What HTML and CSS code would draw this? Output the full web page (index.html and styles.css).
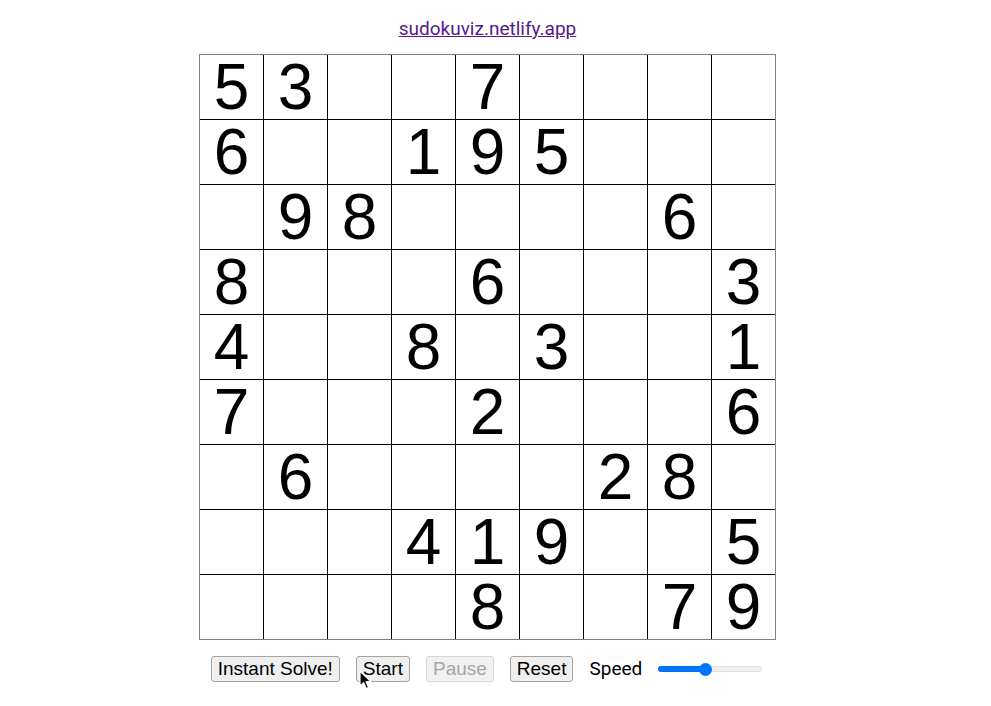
FILE: index.html
```html
<!DOCTYPE html>
<html>
<head>
<meta charset="utf-8">
<link rel="stylesheet" href="styles.css">
</head>
<body>
<div class="page">
  <div class="top"><a class="link" href="#">sudokuviz.netlify.app</a></div>
  <table class="board">
    <tr><td>5</td><td>3</td><td></td><td></td><td>7</td><td></td><td></td><td></td><td></td></tr>
    <tr><td>6</td><td></td><td></td><td>1</td><td>9</td><td>5</td><td></td><td></td><td></td></tr>
    <tr><td></td><td>9</td><td>8</td><td></td><td></td><td></td><td></td><td>6</td><td></td></tr>
    <tr><td>8</td><td></td><td></td><td></td><td>6</td><td></td><td></td><td></td><td>3</td></tr>
    <tr><td>4</td><td></td><td></td><td>8</td><td></td><td>3</td><td></td><td></td><td>1</td></tr>
    <tr><td>7</td><td></td><td></td><td></td><td>2</td><td></td><td></td><td></td><td>6</td></tr>
    <tr><td></td><td>6</td><td></td><td></td><td></td><td></td><td>2</td><td>8</td><td></td></tr>
    <tr><td></td><td></td><td></td><td>4</td><td>1</td><td>9</td><td></td><td></td><td>5</td></tr>
    <tr><td></td><td></td><td></td><td></td><td>8</td><td></td><td></td><td>7</td><td>9</td></tr>
  </table>
  <div class="controls">
    <button class="btn solve">Instant Solve!</button>
    <button class="btn">Start</button>
    <button class="btn" disabled>Pause</button>
    <button class="btn">Reset</button>
    <span class="label">Speed</span>
    <input class="speed" type="range" min="0" max="100" value="45">
  </div>
</div>
<svg class="cursor" width="14" height="21" viewBox="0 0 14 21">
  <path d="M1 1 L1 16 L4.6 12.6 L7.2 18.6 L9.6 17.6 L7 11.7 L12 11.7 Z" fill="#000" stroke="#fff" stroke-width="1.2" stroke-linejoin="round"/>
</svg>
</body>
</html>
```
FILE: styles.css
```css
html, body {
  margin: 0;
  padding: 0;
  background: #fff;
}
.page {
  width: 975px;
}
.top {
  text-align: center;
  padding-top: 17px;
  height: 54px;
  box-sizing: border-box;
}
.link {
  font-family: Roboto, "Liberation Sans", sans-serif;
  font-size: 19px;
  color: #551a8b;
  text-decoration: underline;
}
.board {
  margin: 0 auto;
  border: 1px solid #808080;
  border-spacing: 0;
  table-layout: fixed;
}
.board td {
  width: 63px;
  height: 64px;
  padding: 0;
  border-right: 1px solid #000;
  border-bottom: 1px solid #000;
  font-family: "Liberation Sans", Arial, sans-serif;
  font-size: 64px;
  line-height: 64px;
  text-align: center;
  vertical-align: middle;
  color: #000;
}
.board td:last-child {
  border-right: none;
}
.board tr:last-child td {
  border-bottom: none;
}
.controls {
  display: flex;
  align-items: center;
  justify-content: center;
  margin-top: 16px;
  margin-left: -2px;
}
.btn {
  font-family: "Liberation Sans", Arial, sans-serif;
  font-size: 19px;
  line-height: 22px;
  padding: 1px 6px;
  border: 1px solid #a3a3a3;
  border-radius: 3px;
  background: #efefef;
  color: #000;
  margin: 0 0 0 16px;
}
.btn.solve {
  margin-left: 0;
}
.btn:disabled {
  color: #a6a6a6;
  background: #f1f1f1;
  border-color: #d6d6d6;
}
.label {
  font-family: Roboto, "Liberation Sans", sans-serif;
  font-size: 19px;
  margin: -2px 0 0 16px;
}
.speed {
  -webkit-appearance: none;
  appearance: none;
  width: 104px;
  height: 14px;
  margin: 0 0 0 16px;
  padding: 0;
  background: transparent;
}
.speed::-webkit-slider-runnable-track {
  height: 6px;
  border-radius: 3px;
  background: linear-gradient(to right, #0075ff 0, #0075ff 47px, #efefef 47px, #efefef 100%);
  box-shadow: inset 0 0 0 1px rgba(0,0,0,0.06);
}
.speed::-webkit-slider-thumb {
  -webkit-appearance: none;
  width: 13px;
  height: 13px;
  border-radius: 50%;
  background: #0075ff;
  border: none;
  margin-top: -3.5px;
}
.cursor {
  position: absolute;
  left: 359px;
  top: 670px;
}
```
